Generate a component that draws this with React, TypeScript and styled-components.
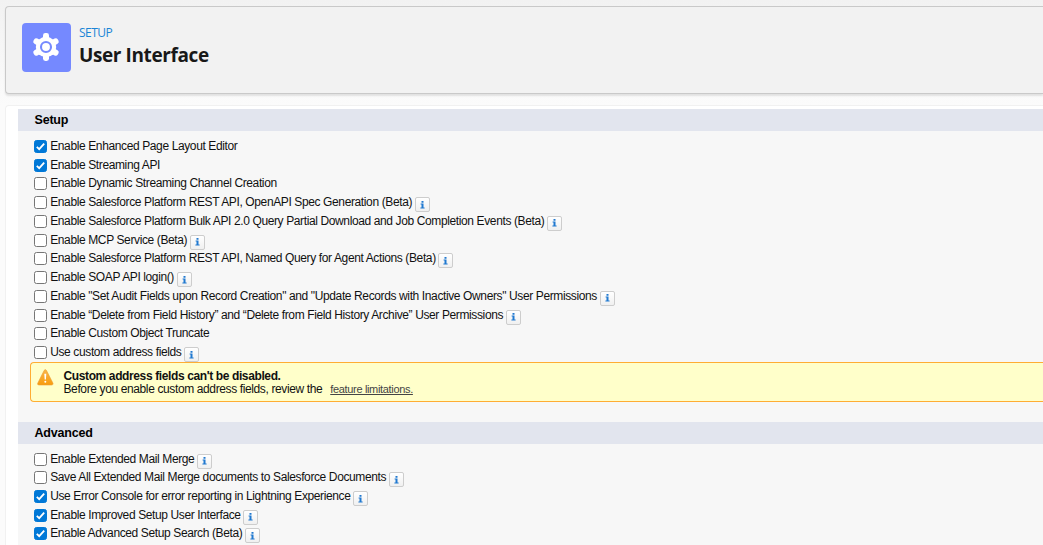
import React, { useState } from 'react';
import styled, { createGlobalStyle } from 'styled-components';

const GlobalStyle = createGlobalStyle`
    * {
        box-sizing: border-box;
    }

    body {
        margin: 0;
        height: 545px;
        overflow: hidden;
        background: linear-gradient(#f2f2f2 0, #fbfbfb 105px, #fbfbfb 100%);
        font-family: "Liberation Sans", Arial, sans-serif;
        color: #111;
    }
`

const Page = styled.div`
    height: 545px;
    padding: 6px 0 0 5px;
    overflow: hidden;
`

const PageHeader = styled.header`
    height: 88px;
    padding: 16px;
    display: flex;
    gap: 8px;
    background: #f2f2f2;
    border: 1px solid #c9c9c9;
    border-right: none;
    border-radius: 4px 0 0 4px;
    box-shadow: 0 2px 2px rgba(0, 0, 0, 0.1);
`

const HeaderIcon = styled.div`
    width: 49px;
    height: 49px;
    padding: 0 1px 1px 0;
    border-radius: 4px;
    background: #7589ff;
    display: flex;
    align-items: center;
    justify-content: center;
`

const HeaderText = styled.div`
    font-family: "Open Sans", "Noto Sans", sans-serif;
    white-space: nowrap;
`

const Eyebrow = styled.div`
    margin-top: 2px;
    font-size: 12px;
    line-height: 16px;
    letter-spacing: -0.55px;
    color: #1b85d6;
`

const Title = styled.h1`
    margin: 2px 0 0;
    font-size: 19px;
    line-height: 24px;
    font-weight: 700;
    letter-spacing: -0.4px;
    color: #181818;
`

const Panel = styled.main`
    height: 460px;
    margin-top: 11px;
    padding: 3px 0 0 12px;
    background: #fff;
    border: 1px solid #f1f1f1;
    border-right: none;
    border-radius: 4px 0 0 0;
`

const Content = styled.div`
    height: 100%;
    background: #f7f7f7;
`

const SectionTitle = styled.h2`
    margin: 0;
    height: 22px;
    padding-left: 16.5px;
    font-size: 12.5px;
    line-height: 22px;
    font-weight: 700;
    letter-spacing: -0.2px;
    color: #000;
    background: #e2e5ee;
`

const Options = styled.div<{ $rowHeight: number }>`
    padding: 6px 0 0 16px;
    display: grid;
    grid-auto-rows: ${props => props.$rowHeight}px;
`

const OptionRow = styled.div`
    display: flex;
    align-items: center;
    white-space: nowrap;
`

const OptionLabel = styled.label`
    display: flex;
    align-items: center;
    gap: 3.2px;
    font-size: 12px;
    line-height: 18px;
    letter-spacing: -0.38px;
`

const OptionText = styled.span`
    margin-top: -1px;
`

const Checkbox = styled.input`
    appearance: none;
    flex: none;
    width: 13px;
    height: 13px;
    margin: 0;
    border: 1px solid #767676;
    border-radius: 2.5px;
    background: #fff;

    &:checked {
        border-color: #0078d7;
        background: #0078d7;
    }
`

const CheckHolder = styled.span`
    display: grid;
    flex: none;

    & > * {
        grid-area: 1 / 1;
    }

    & svg {
        pointer-events: none;
    }
`

const InfoButton = styled.button`
    width: 15px;
    height: 15px;
    margin: 4px 0 0 2.7px;
    padding: 0;
    display: flex;
    align-items: center;
    justify-content: center;
    border: 1px solid #cdcdcd;
    border-radius: 2px;
    background: linear-gradient(#fff, #f0f0f0);
`

const Notice = styled.div`
    height: 40px;
    margin: 0 0 20px 12px;
    padding: 6px 0 0 5.5px;
    display: flex;
    gap: 10px;
    font-size: 12px;
    line-height: 13px;
    letter-spacing: -0.38px;
    color: #111;
    background: #ffffca;
    border: 1px solid #ffad33;
    border-right: none;
    border-radius: 4px 0 0 4px;
`

const NoticeText = styled.div`
    padding-top: 1px;
`

const NoticeTitle = styled.div`
    font-weight: 700;
`

const NoticeLink = styled.a`
    margin-left: 5px;
    font-size: 11px;
    letter-spacing: -0.33px;
    color: #444;
    text-decoration: underline;
`

const GearIcon = () => (
    <svg width="28" height="30" viewBox="0 0 28 30">
        <g fill="#fff">
            {[0, 60, 120].map(angle => (
                <rect key={angle} x="11" y="1" width="6" height="28" rx="2.4" transform={`rotate(${angle} 14 15)`} />
            ))}
            <circle cx="14" cy="15" r="10.2" />
        </g>
        <circle cx="14" cy="15" r="5" fill="none" stroke="#7589ff" strokeWidth="2.1" />
    </svg>
)

const WarningIcon = () => (
    <svg width="17" height="17" viewBox="0 0 17 17">
        <defs>
            <linearGradient id="warning" x1="0" y1="0" x2="0" y2="1">
                <stop offset="0" stopColor="#f9b54a" />
                <stop offset="1" stopColor="#f89c0e" />
            </linearGradient>
        </defs>
        <path d="M7.1 1.5Q8.3-.3 9.5 1.5L16 14.3Q16.4 16 14.6 16H2Q.2 16 .7 14.3Z" fill="url(#warning)" stroke="#eda036" strokeWidth=".6" />
        <path d="M7.3 4.8H9.3L8.9 10.6H7.7Z" fill="#fff" />
        <circle cx="8.3" cy="12.7" r="1" fill="#fff" />
    </svg>
)

const InfoIcon = () => (
    <svg width="5" height="8" viewBox="0 0 5 8">
        <path d="M1.5 0H3.5V1.7H1.5ZM.6 2.6H3.5V6.6H4.6V7.6H.4V6.6H1.5V3.6H.6Z" fill="#2079d0" />
    </svg>
)

interface OptionProps {
    text: string,
    checked?: boolean,
    info?: boolean,
}

const setupOptions: OptionProps[] = [
    { text: 'Enable Enhanced Page Layout Editor', checked: true },
    { text: 'Enable Streaming API', checked: true },
    { text: 'Enable Dynamic Streaming Channel Creation' },
    { text: 'Enable Salesforce Platform REST API, OpenAPI Spec Generation (Beta)', info: true },
    { text: 'Enable Salesforce Platform Bulk API 2.0 Query Partial Download and Job Completion Events (Beta)', info: true },
    { text: 'Enable MCP Service (Beta)', info: true },
    { text: 'Enable Salesforce Platform REST API, Named Query for Agent Actions (Beta)', info: true },
    { text: 'Enable SOAP API login()', info: true },
    { text: 'Enable "Set Audit Fields upon Record Creation" and "Update Records with Inactive Owners" User Permissions', info: true },
    { text: 'Enable “Delete from Field History” and “Delete from Field History Archive” User Permissions', info: true },
    { text: 'Enable Custom Object Truncate' },
    { text: 'Use custom address fields', info: true },
]

const advancedOptions: OptionProps[] = [
    { text: 'Enable Extended Mail Merge', info: true },
    { text: 'Save All Extended Mail Merge documents to Salesforce Documents', info: true },
    { text: 'Use Error Console for error reporting in Lightning Experience', checked: true, info: true },
    { text: 'Enable Improved Setup User Interface', checked: true, info: true },
    { text: 'Enable Advanced Setup Search (Beta)', checked: true, info: true },
]

const Option = ({ text, checked = false, info }: OptionProps) => {
    const [value, setValue] = useState(checked);
    return (
        <OptionRow>
            <OptionLabel>
                <CheckHolder>
                    <Checkbox type="checkbox" checked={value} onChange={() => setValue(!value)} />
                    {value && (
                        <svg width="13" height="13" viewBox="0 0 13 13">
                            <path d="M2.8 6.8L5.2 9.2L10.2 3.6" fill="none" stroke="#fff" strokeWidth="1.8" />
                        </svg>
                    )}
                </CheckHolder>
                <OptionText>{text}</OptionText>
            </OptionLabel>
            {info && <InfoButton type="button" aria-label="Info"><InfoIcon /></InfoButton>}
        </OptionRow>
    )
}

const App = () => {
    return (
        <Page>
            <GlobalStyle />
            <PageHeader>
                <HeaderIcon><GearIcon /></HeaderIcon>
                <HeaderText>
                    <Eyebrow>SETUP</Eyebrow>
                    <Title>User Interface</Title>
                </HeaderText>
            </PageHeader>
            <Panel>
                <Content>
                    <SectionTitle>Setup</SectionTitle>
                    <Options $rowHeight={18.75}>
                        {setupOptions.map(option => <Option key={option.text} {...option} />)}
                    </Options>
                    <Notice>
                        <WarningIcon />
                        <NoticeText>
                            <NoticeTitle>Custom address fields can't be disabled.</NoticeTitle>
                            Before you enable custom address fields, review the <NoticeLink>feature limitations.</NoticeLink>
                        </NoticeText>
                    </Notice>
                    <SectionTitle>Advanced</SectionTitle>
                    <Options $rowHeight={18.65}>
                        {advancedOptions.map(option => <Option key={option.text} {...option} />)}
                    </Options>
                </Content>
            </Panel>
        </Page>
    )
}

export default App;
